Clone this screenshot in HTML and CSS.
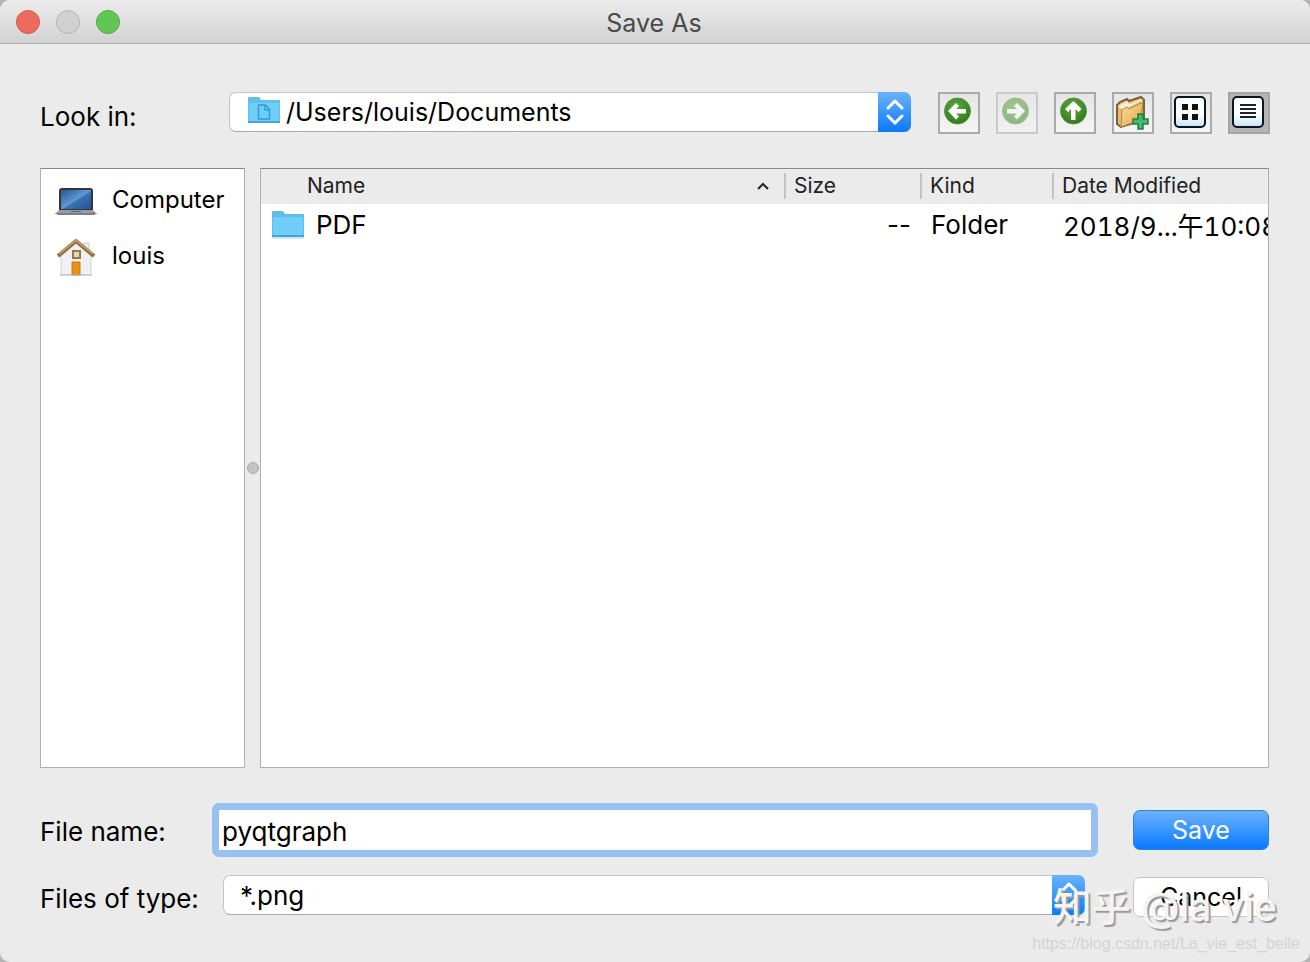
FILE: index.html
```html
<!DOCTYPE html>
<html lang="en">
<head>
<meta charset="utf-8">
<title>Save As</title>
<link rel="stylesheet" href="styles.css">
</head>
<body>
<main class="window">
  <header class="titlebar">
    <div class="lights">
      <button class="light close" aria-label="Close"></button>
      <button class="light minimize" aria-label="Minimize" disabled></button>
      <button class="light maximize" aria-label="Zoom"></button>
    </div>
    <h1 class="title">Save As</h1>
  </header>

  <form class="dialog">
    <div class="location">
      <label class="location-label" for="look">Look in:</label>
      <div class="combo combo-path">
        <select id="look"><option>/Users/louis/Documents</option></select>
        <svg class="combo-icon" width="32" height="29" viewBox="0 0 32 29">
          <path d="M0 27V2q0-1 1-1h10q1 0 2 3h19v23z" fill="#63bfea"/>
          <path d="M1 7h30v18H1z" fill="#70cefb"/>
          <path d="M0 26h32" stroke="#4ba3cf" stroke-width="2"/>
          <path d="M10.500 9h7l4 4v10h-11zM17 9v5h5" fill="none" stroke="#2f9bd2" stroke-width="1.500"/>
        </svg>
        <svg class="combo-arrow" width="33" height="40" viewBox="0 0 33 40"><path d="M10 16l7-7 7 7M10 24l7 7 7-7"/></svg>
      </div>
      <div class="tools">
        <button type="button" class="tool" aria-label="Back">
          <svg width="38" height="38" viewBox="0 0 38 38"><circle cx="17.500" cy="17" r="13" fill="url(#green)" stroke="#5a9145"/><path d="M8 17l8-8 3 3-3 3h10v4.500H16l3 3-3 3z" fill="#fff"/></svg>
        </button>
        <button type="button" class="tool" aria-label="Forward" disabled>
          <svg width="38" height="38" viewBox="0 0 38 38"><circle cx="17.500" cy="17" r="13" fill="url(#green)" stroke="#5a9145"/><path d="M27 17l-8-8-3 3 3 3H9v4.500h10l-3 3 3 3z" fill="#fff"/></svg>
        </button>
        <button type="button" class="tool" aria-label="Parent directory">
          <svg width="38" height="38" viewBox="0 0 38 38">
            <defs><radialGradient id="green" cx=".45" cy=".35" r=".65"><stop offset="0" stop-color="#5ea638"/><stop offset=".6" stop-color="#43902a"/><stop offset="1" stop-color="#2f7a1c"/></radialGradient></defs>
            <circle cx="17.500" cy="17" r="13" fill="url(#green)" stroke="#5a9145"/><path d="M17.500 7l8 8-3 3-3-3v11H15V15l-3 3-3-3z" fill="#fff"/>
          </svg>
        </button>
        <button type="button" class="tool" aria-label="Create new folder">
          <svg width="38" height="38" viewBox="0 0 38 38">
            <defs><linearGradient id="fold" x2="1" y2="1"><stop offset="0" stop-color="#fae2a5"/><stop offset="1" stop-color="#e0a03c"/></linearGradient></defs>
            <path d="M3 11l3-3 7-3 2 2 12-4 3 3v20L7 33l-4-3z" fill="#e8bd6c" stroke="#7b6038" stroke-width="2"/>
            <path d="M4 12l9-5 2 3 12-5 2 1-20 10z" fill="#f8edcf"/>
            <path d="M8 16l5-3 2 2 12-6 2 1-3 16-19 7z" fill="url(#fold)" stroke="#a98750"/>
            <path d="M24 20h5v5h5v5h-5v5h-5v-5h-5v-5h5z" fill="#3fbe6b" stroke="#2a7d42" stroke-width="1.500"/>
          </svg>
        </button>
        <button type="button" class="tool" aria-label="List view">
          <svg width="38" height="38" viewBox="0 0 38 38">
            <defs><linearGradient id="pane" x2="0" y2="1"><stop offset=".55" stop-color="#fff"/><stop offset="1" stop-color="#c9e3f3"/></linearGradient></defs>
            <rect x="3" y="3" width="30" height="30" rx="4" fill="url(#pane)" stroke="#061724" stroke-width="2"/><path d="M10 10h6v6h-6zM20 10h6v6h-6zM10 20h6v6h-6zM20 20h6v6h-6z" fill="#111"/>
          </svg>
        </button>
        <button type="button" class="tool active" aria-label="Detail view" aria-pressed="true">
          <svg width="38" height="38" viewBox="0 0 38 38"><rect x="3" y="3" width="30" height="30" rx="4" fill="url(#pane)" stroke="#061724" stroke-width="2"/><path d="M10 11h16M10 15h16M10 19h16M10 23h16" stroke="#222" stroke-width="2"/></svg>
        </button>
      </div>
    </div>

    <div class="browser">
      <nav class="places">
        <a class="place" href="#computer">
          <svg width="42" height="40" viewBox="0 0 42 40">
            <defs><linearGradient id="screen" x2="1" y2="1"><stop offset="0" stop-color="#28558f"/><stop offset=".5" stop-color="#5d9ad6"/><stop offset=".55" stop-color="#3773b5"/><stop offset="1" stop-color="#235290"/></linearGradient></defs>
            <rect x="4" y="5" width="34" height="25" rx="3" fill="#33353b"/><path d="M6 7h30v19H6z" fill="url(#screen)"/>
            <path d="M4 27h34l4 4H0z" fill="#999da3"/><path d="M0 30h42l-3 2H3z" fill="#7b7e84"/><path d="M16 28h10v1H16z" fill="#666"/>
          </svg>
          <span>Computer</span>
        </a>
        <a class="place" href="#louis">
          <svg width="42" height="40" viewBox="0 0 42 40">
            <path d="M29 4h5v11h-5z" fill="#eee" stroke="#ccc"/><path d="M6 16L21 3l15 13v20H6z" fill="#f1f1f1" stroke="#d2d2d2"/>
            <path d="M3 17L21 2l18 15" fill="none" stroke="#8b6d48" stroke-width="4"/><path d="M4 15L21 1l17 14" fill="none" stroke="#c49861" stroke-width="2"/>
            <path d="M18 12h7v7h-7z" fill="#e8d8bd" stroke="#9c764b" stroke-width="2"/><path d="M17 23h8v13h-8z" fill="#f09008" stroke="#b77b36"/><path d="M5 36h32" stroke="#bbb"/>
          </svg>
          <span>louis</span>
        </a>
      </nav>
      <div class="splitter"><span class="grip"></span></div>
      <div class="files">
        <table>
          <colgroup><col class="col-name"><col class="col-size"><col class="col-kind"><col class="col-date"></colgroup>
          <thead><tr>
            <th class="name"><div class="head"><span>Name</span><svg width="14" height="10" viewBox="0 0 14 10"><path d="M2 8l5-5 5 5" fill="none" stroke="#222" stroke-width="2"/></svg></div></th>
            <th><div class="head">Size</div></th><th><div class="head">Kind</div></th><th><div class="head">Date Modified</div></th>
          </tr></thead>
          <tbody><tr>
            <td><div class="file"><svg width="32" height="29" viewBox="0 0 32 29"><path d="M0 27V2q0-1 1-1h9q2 0 3 3h19v23z" fill="#61bce7"/><path d="M1 7h30v18H1z" fill="#70cefb"/><path d="M0 26h32" stroke="#4aa0cc" stroke-width="2"/><path d="M0 28h32" stroke="#8fd6f7"/></svg><span>PDF</span></div></td>
            <td class="size">--</td><td>Folder</td><td class="date">2018/9...午10:08</td>
          </tr></tbody>
        </table>
      </div>
    </div>

    <div class="fields">
      <label for="filename">File name:</label>
      <input id="filename" type="text" value="pyqtgraph">
      <button type="button" class="action save">Save</button>
      <label for="type">Files of type:</label>
      <div class="combo combo-type">
        <select id="type"><option>*.png</option></select>
        <svg class="combo-arrow" width="33" height="40" viewBox="0 0 33 40"><path d="M10 16l7-7 7 7M10 24l7 7 7-7"/></svg>
      </div>
      <button type="button" class="action cancel">Cancel</button>
    </div>
  </form>
  <div class="credit">知乎 @la vie</div>
  <div class="source">https://blog.csdn.net/La_vie_est_belle</div>
</main>
</body>
</html>
```
FILE: styles.css
```css
* { box-sizing: border-box; }
body { margin: 0; background: #b5b5b5; }
body, button, input, select { font-family: Inter, "Noto Sans CJK SC", sans-serif; font-size: 26px; color: #000; }
svg { display: block; flex: none; }

.window {
  position: relative;
  display: flex;
  flex-direction: column;
  min-height: 100vh;
  overflow: hidden;
  border-radius: 10px;
  background: #ebebeb;
}
.titlebar {
  display: grid;
  grid-template-columns: 1fr auto 1fr;
  align-items: center;
  height: 44px;
  padding: 0 18px 0 16px;
  border-bottom: 1px solid #b0b0b0;
  background: linear-gradient(#ececec, #d2d2d2);
}
.lights { display: flex; gap: 16px; }
.light { width: 24px; height: 24px; padding: 0; border: 1px solid; border-radius: 50%; }
.close { background: #ed6a5f; border-color: #cf5a50; }
.minimize { background: #d0d0d0; border-color: #b4b4b4; }
.maximize { background: #62c655; border-color: #52a846; }
.title { margin: 0; padding-top: 2px; font-size: 25px; font-weight: 400; line-height: 32px; color: #4b4b4b; }

.dialog { display: flex; flex: 1; flex-direction: column; padding: 48px 40px 43px; }
.location { display: flex; align-items: flex-start; height: 42px; }
.location-label { width: 189px; padding-top: 9px; line-height: 32px; }

.combo { position: relative; }
.combo select {
  display: block;
  width: 100%;
  height: 40px;
  padding: 0 40px 0 16px;
  border: 1px solid #c4c4c4;
  border-bottom-color: #aaa;
  border-radius: 7px;
  background: #fff;
  appearance: none;
}
.combo-path { flex: 1; margin-right: 27px; }
.combo-path select { padding-left: 56px; font-size: 25px; }
.combo-icon { position: absolute; left: 19px; top: 4px; pointer-events: none; }
.combo-arrow {
  position: absolute;
  top: 0;
  right: 0;
  border-radius: 0 7px 7px 0;
  background: linear-gradient(#6bb2fb, #0a7aff);
  pointer-events: none;
}
.combo-arrow path { fill: none; stroke: #fff; stroke-width: 3; stroke-linecap: round; stroke-linejoin: round; }

.tools { display: flex; gap: 16px; }
.tool { width: 42px; height: 42px; padding: 0; border: 2px solid #aaa; background: linear-gradient(#e5e5e5, #f5f5f5); }
.tool:disabled { opacity: 0.5; }
.tool.active { border-color: #a5a5a5; background: #b5b5b5; }

.browser { display: flex; flex: 1; margin: 34px 1px 0 0; }
.places { width: 205px; padding: 4px 0 0 14px; border: 1px solid #b0b0b0; border-top-color: #888; background: #fff; }
.place { display: flex; align-items: center; gap: 15px; height: 56px; font-size: 24px; color: #000; text-decoration: none; }
.place svg { margin-top: 4px; }
.place span { padding-bottom: 4px; }
.splitter { display: flex; align-items: center; justify-content: center; width: 15px; }
.grip { width: 12px; height: 12px; border: 1px solid #aaa; border-radius: 50%; background: #c4c4c4; }

.files { flex: 1; min-width: 0; overflow: hidden; border: 1px solid #b0b0b0; border-top-color: #888; background: #fff; }
table { width: 100%; table-layout: fixed; border-collapse: collapse; }
.col-size { width: 136px; }
.col-kind { width: 132px; }
.col-date { width: 216px; }
th { height: 35px; padding: 0 0 2px; background: #ebebeb; font-size: 21px; font-weight: 400; text-align: left; color: #222; }
.head { display: flex; align-items: center; height: 26px; padding-left: 8px; border-left: 2px solid #c3c3c3; }
.name .head { justify-content: space-between; padding: 0 14px 0 46px; border-left: 0; }
td { height: 40px; padding: 0 0 0 11px; white-space: nowrap; overflow: hidden; }
.file { display: flex; align-items: center; gap: 12px; }
.size { padding-right: 9px; text-align: right; }
.date { font-variant-numeric: tabular-nums; text-overflow: clip; }

.fields {
  display: grid;
  grid-template-columns: 172px 1fr 136px;
  grid-template-rows: 54px 44px;
  row-gap: 18px;
  align-items: center;
  margin: 35px 1px 0 0;
}
.fields label { padding-top: 2px; white-space: nowrap; }
.fields input {
  width: auto;
  height: 54px;
  margin-right: 35px;
  padding: 2px 3px 0;
  border: 7px solid #96c1f0;
  border-radius: 7px;
  outline: 0;
  background: #fff;
}
.combo-type { align-self: start; margin: 0 48px 0 11px; }
.action { height: 40px; padding: 0; border: 1px solid #c4c4c4; border-radius: 7px; background: #fff; font-size: 25px; }
.save { border-color: #2a82e4; background: linear-gradient(#6bb2fb, #0a7aff); color: #fff; }

.credit, .source { position: absolute; white-space: nowrap; pointer-events: none; }
.credit { right: 33px; bottom: 30px; font-size: 39px; font-weight: 500; line-height: 50px; color: #f4f4f4; text-shadow: 2px 2px 1px #999; }
.source { right: 10px; bottom: 8px; font-family: "Liberation Sans", sans-serif; font-size: 16px; line-height: 20px; color: #d4d4d4; }
```
